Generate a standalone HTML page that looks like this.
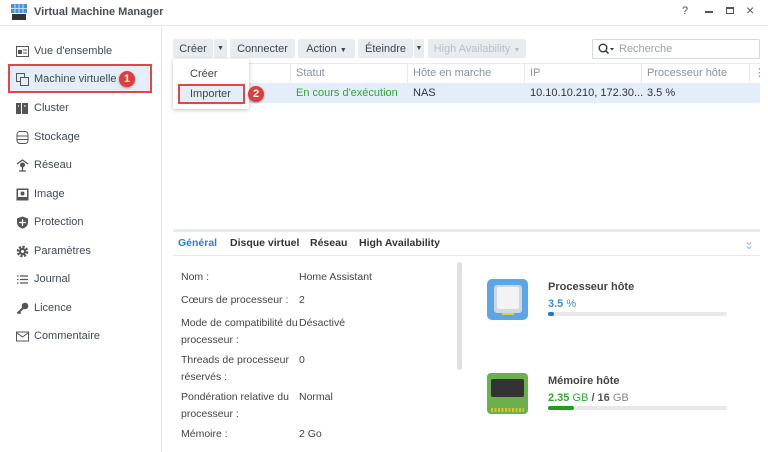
<!DOCTYPE html>
<html><head><meta charset="utf-8"><style>
*{box-sizing:border-box;margin:0;padding:0}
body{width:768px;height:452px;overflow:hidden;background:#fff;font-family:"Liberation Sans",sans-serif;font-size:11px;color:#333;position:relative}
.a{position:absolute}
.side div.it{position:absolute;left:16px;height:20px;line-height:20px;font-size:11px;color:#404a55}
.side svg{position:absolute;left:0;top:4px}
.side span{position:absolute;left:18px;white-space:nowrap}
.btn{position:absolute;top:39px;height:19px;background:#e8ecf0;border-radius:2px;line-height:20px;text-align:center;color:#3b4550;font-size:11px}
.th{position:absolute;top:63px;height:20px;line-height:21px;color:#8a939c}
.td{position:absolute;top:83px;height:20px;line-height:21px;color:#333}
.lb{position:absolute;left:181px;color:#444;line-height:17px;font-size:10.5px}
.vl{position:absolute;left:299px;color:#444;font-size:10.5px}
.badge{position:absolute;width:16px;height:16px;border-radius:50%;background:#e03c3c;color:#fff;font-weight:bold;text-align:center;line-height:16px;font-size:11px;box-shadow:0 1px 2px rgba(0,0,0,.4)}
</style></head><body>
<svg class="a" style="left:11px;top:4px" width="16" height="16"><rect x="0" y="0" width="16" height="9" fill="#4a8fd8"/><path d="M4 0v9M8 0v9M12 0v9M0 4.5h16" stroke="#bfe0ff" stroke-width="1"/><rect x="1" y="10" width="14" height="6" fill="#333"/></svg>
<div class="a" style="left:34px;top:6px;font-weight:bold;color:#4a4f55;font-size:11px">Virtual Machine Manager</div>
<div class="a" style="left:682px;top:5px;color:#555">?</div>
<div class="a" style="left:705px;top:11px;width:8px;height:1.5px;background:#555"></div>
<div class="a" style="left:726px;top:7px;width:8px;height:7px;border:1.5px solid #555;border-top-width:2.5px"></div>
<div class="a" style="left:746px;top:2px;color:#555;font-size:14px">×</div>
<div class="a" style="left:0;top:25px;width:768px;height:1px;background:#e6e9ec"></div>
<div class="a" style="left:161px;top:26px;width:1px;height:426px;background:#e3e6ea"></div>
<div class="a" style="left:8px;top:64px;width:144px;height:29px;background:#e3eefa;border:2px solid #e04646"></div>
<div class="side">
<div class="it" style="top:41px"><svg width="13" height="13"><rect x=".5" y="1.5" width="12" height="10" fill="none" stroke="#555"/><rect x="2" y="5" width="4" height="4" fill="#555"/><path d="M7 5h4M7 8h4" stroke="#555"/></svg><span>Vue d'ensemble</span></div>
<div class="it" style="top:69px"><svg width="13" height="13"><rect x=".5" y=".5" width="8" height="8" fill="none" stroke="#555"/><rect x="4.5" y="4.5" width="8" height="8" fill="#e3eefa" stroke="#555"/></svg><span>Machine virtuelle</span></div>
<div class="it" style="top:98px"><svg width="13" height="13"><rect x="0" y="1" width="5" height="11" fill="#555"/><rect x="6" y="1" width="6" height="11" fill="#555"/><path d="M2 4h1M8 4h2" stroke="#fff"/></svg><span>Cluster</span></div>
<div class="it" style="top:127px"><svg width="13" height="13"><rect x="1" y=".5" width="11" height="12" rx="3" fill="none" stroke="#555"/><path d="M1 5h11M1 8.5h11" stroke="#555"/></svg><span>Stockage</span></div>
<div class="it" style="top:155px"><svg width="13" height="13"><path d="M1 5L6.5 1 12 5" fill="none" stroke="#555" stroke-width="1.3"/><circle cx="6.5" cy="6" r="2.5" fill="#555"/><path d="M3 12h7M6.5 8v4" stroke="#555" stroke-width="1.3"/></svg><span>Réseau</span></div>
<div class="it" style="top:184px"><svg width="13" height="13"><rect x=".5" y=".5" width="12" height="12" fill="#555"/><rect x="2" y="2" width="9" height="7" fill="#fff"/><circle cx="6.5" cy="5.5" r="2" fill="#555"/></svg><span>Image</span></div>
<div class="it" style="top:212px"><svg width="13" height="13"><path d="M6.5 .5L12 2.5v4c0 3-2.5 5.5-5.5 6C3.5 12 1 9.5 1 6.5v-4z" fill="#555"/><path d="M6.5 3v7M3 6.5h7" stroke="#fff" stroke-width="1.2"/></svg><span>Protection</span></div>
<div class="it" style="top:241px"><svg width="13" height="13"><circle cx="6.5" cy="6.5" r="4.5" fill="none" stroke="#555" stroke-width="2.6" stroke-dasharray="2.2 1.3"/><circle cx="6.5" cy="6.5" r="3.5" fill="#555"/><circle cx="6.5" cy="6.5" r="1.5" fill="#fff"/></svg><span>Paramètres</span></div>
<div class="it" style="top:269px"><svg width="13" height="13"><path d="M1 3h1.5M1 6.5h1.5M1 10h1.5M4 3h8M4 6.5h8M4 10h8" stroke="#555" stroke-width="1.2"/></svg><span>Journal</span></div>
<div class="it" style="top:298px"><svg width="13" height="13"><circle cx="9" cy="4" r="3.3" fill="#555"/><path d="M7 6L1.5 11.5M3 10l1.5 1.5" stroke="#555" stroke-width="2"/></svg><span>Licence</span></div>
<div class="it" style="top:326px"><svg width="13" height="13"><rect x=".5" y="2" width="12" height="9" fill="none" stroke="#555"/><path d="M1 3l5.5 4 5.5-4" fill="none" stroke="#555"/></svg><span>Commentaire</span></div>
</div>
<div class="badge" style="left:119px;top:71px">1</div>
<div class="btn" style="left:173px;width:40px">Créer</div>
<div class="btn" style="left:214px;width:13px;font-size:7px">▼</div>
<div class="btn" style="left:230px;width:65px">Connecter</div>
<div class="btn" style="left:298px;width:57px">Action <span style="font-size:7px">▼</span></div>
<div class="btn" style="left:358px;width:55px">Éteindre</div>
<div class="btn" style="left:414px;width:10px;font-size:7px">▼</div>
<div class="btn" style="left:428px;width:98px;color:#b8bfc6">High Availability <span style="font-size:7px">▼</span></div>
<div class="a" style="left:592px;top:39px;width:168px;height:20px;border:1px solid #d5dade;border-radius:2px"></div>
<svg class="a" style="left:598px;top:43px" width="18" height="12"><circle cx="5" cy="5" r="3.8" fill="none" stroke="#333" stroke-width="1.4"/><path d="M7.5 7.5l3 3" stroke="#333" stroke-width="1.5"/><path d="M12 5h4l-2 2.5z" fill="#333"/></svg>
<div class="a" style="left:619px;top:43px;color:#9aa2aa">Recherche</div>
<div class="a" style="left:173px;top:63px;width:587px;height:1px;background:#e8ebee"></div>
<div class="a" style="left:173px;top:83px;width:587px;height:20px;background:#e3eefa"></div>
<div class="a" style="left:290px;top:64px;width:1px;height:19px;background:#e8ebee"></div>
<div class="a" style="left:407px;top:64px;width:1px;height:19px;background:#e8ebee"></div>
<div class="a" style="left:524px;top:64px;width:1px;height:19px;background:#e8ebee"></div>
<div class="a" style="left:641px;top:64px;width:1px;height:19px;background:#e8ebee"></div>
<div class="a" style="left:749px;top:64px;width:1px;height:19px;background:#e8ebee"></div>
<div class="th" style="left:296px">Statut</div>
<div class="th" style="left:413px">Hôte en marche</div>
<div class="th" style="left:530px">IP</div>
<div class="th" style="left:647px">Processeur hôte</div>
<div class="th" style="left:754px">⋮</div>
<div class="td" style="left:296px;color:#2ea82e">En cours d'exécution</div>
<div class="td" style="left:413px">NAS</div>
<div class="td" style="left:530px">10.10.10.210, 172.30...</div>
<div class="td" style="left:647px">3.5 %</div>
<div class="a" style="left:173px;top:59px;width:76px;height:50px;background:#fff;box-shadow:0 1px 4px rgba(0,0,0,.25);border-radius:2px"></div>
<div class="a" style="left:190px;top:68px;color:#444">Créer</div>
<div class="a" style="left:178px;top:84px;width:67px;height:20px;background:#e3eefa;border:2px solid #e04646"></div>
<div class="a" style="left:190px;top:88px;color:#444">Importer</div>
<div class="badge" style="left:248px;top:86px">2</div>
<div class="a" style="left:173px;top:229px;width:587px;height:3px;background:#e8ebee"></div>
<div class="a" style="left:178px;top:237px;color:#2b7ed8;font-weight:bold;font-size:10.5px">Général</div>
<div class="a" style="left:230px;top:237px;color:#333;font-weight:bold;font-size:10.5px">Disque virtuel</div>
<div class="a" style="left:310px;top:237px;color:#333;font-weight:bold;font-size:10.5px">Réseau</div>
<div class="a" style="left:359px;top:237px;color:#333;font-weight:bold;font-size:10.5px">High Availability</div>
<div class="a" style="left:744px;top:234px;color:#8ab8e8;font-size:12px">⌄</div>
<div class="a" style="left:744px;top:238px;color:#8ab8e8;font-size:12px">⌄</div>
<div class="a" style="left:173px;top:255px;width:587px;height:1px;background:#e3e9f0"></div>
<div class="lb" style="top:269px">Nom :</div><div class="vl" style="top:271px">Home Assistant</div>
<div class="lb" style="top:292px">Cœurs de processeur :</div><div class="vl" style="top:294px">2</div>
<div class="lb" style="top:315px">Mode de compatibilité du<br>processeur :</div><div class="vl" style="top:317px">Désactivé</div>
<div class="lb" style="top:352px">Threads de processeur<br>réservés :</div><div class="vl" style="top:354px">0</div>
<div class="lb" style="top:389px">Pondération relative du<br>processeur :</div><div class="vl" style="top:391px">Normal</div>
<div class="lb" style="top:426px">Mémoire :</div><div class="vl" style="top:428px">2 Go</div>
<div class="a" style="left:457px;top:262px;width:5px;height:108px;background:#dfe2e5;border-radius:3px"></div>
<div class="a" style="left:487px;top:279px;width:41px;height:41px;background:#5aa6e6;border-radius:5px"></div>
<div class="a" style="left:494px;top:285px;width:28px;height:28px;background:#cfd8e0;border-radius:3px"></div>
<div class="a" style="left:497px;top:287px;width:22px;height:22px;background:#f2f3f5;border-radius:2px"></div>
<div class="a" style="left:502px;top:313px;width:12px;height:2px;background:#d8d040"></div>
<div class="a" style="left:548px;top:281px;font-weight:bold;color:#444">Processeur hôte</div>
<div class="a" style="left:548px;top:298px;font-weight:bold;color:#3a8ee6">3.5 <span style="font-weight:normal">%</span></div>
<div class="a" style="left:548px;top:312px;width:179px;height:4px;background:#e6e8ea;border-radius:2px"></div>
<div class="a" style="left:548px;top:312px;width:6px;height:4px;background:#1a78e0;border-radius:2px"></div>
<div class="a" style="left:487px;top:373px;width:41px;height:41px;background:#6ab04c;border-radius:4px"></div>
<div class="a" style="left:491px;top:379px;width:33px;height:18px;background:#333;border-radius:2px"></div>
<div class="a" style="left:491px;top:408px;width:33px;height:4px;background:repeating-linear-gradient(90deg,#e8c020 0 2px,#6ab04c 2px 3.5px)"></div>
<div class="a" style="left:548px;top:375px;font-weight:bold;color:#444">Mémoire hôte</div>
<div class="a" style="left:548px;top:392px;font-weight:bold;color:#2ea82e">2.35 <span style="font-weight:normal">GB</span> <span style="color:#555">/ 16 <span style="font-weight:normal;color:#888">GB</span></span></div>
<div class="a" style="left:548px;top:406px;width:179px;height:4px;background:#e6e8ea;border-radius:2px"></div>
<div class="a" style="left:548px;top:406px;width:26px;height:4px;background:#1aa01a;border-radius:2px"></div>
</body></html>
